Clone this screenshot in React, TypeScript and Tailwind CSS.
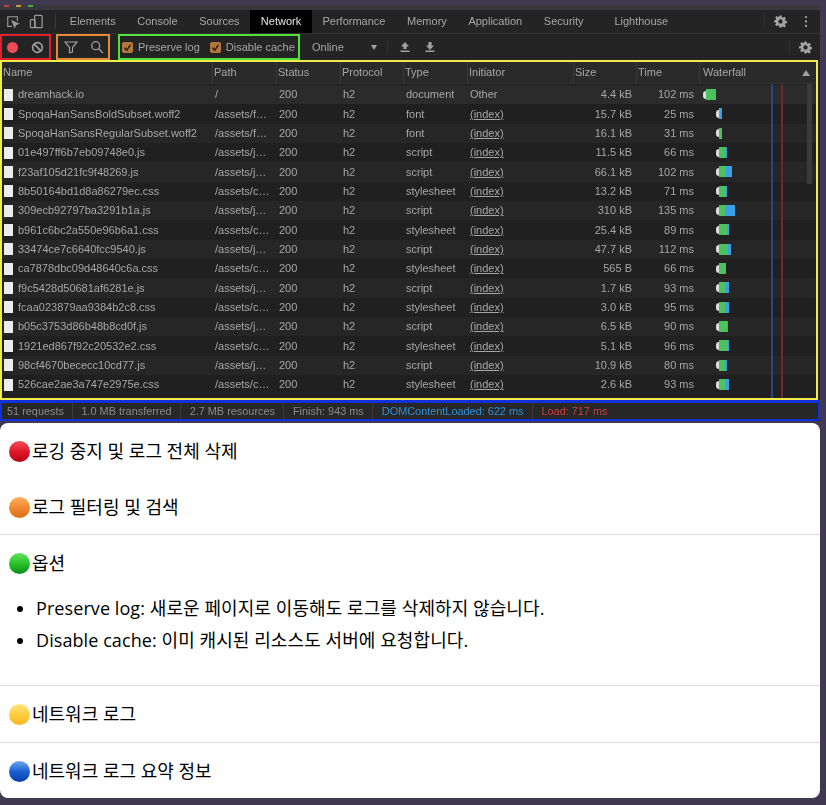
import React from "react";

const rows: [string, string, string, string, string, string, number, number, number][] = [
  ["dreamhack.io", "/", "document", "Other", "4.4 kB", "102 ms", 4, 10, 0],
  ["SpoqaHanSansBoldSubset.woff2", "/assets/f…", "font", "(index)", "15.7 kB", "25 ms", 17, 1, 2],
  ["SpoqaHanSansRegularSubset.woff2", "/assets/f…", "font", "(index)", "16.1 kB", "31 ms", 17, 3, 0],
  ["01e497ff6b7eb09748e0.js", "/assets/j…", "script", "(index)", "11.5 kB", "66 ms", 17, 6, 2],
  ["f23af105d21fc9f48269.js", "/assets/j…", "script", "(index)", "66.1 kB", "102 ms", 17, 7, 6],
  ["8b50164bd1d8a86279ec.css", "/assets/c…", "stylesheet", "(index)", "13.2 kB", "71 ms", 17, 7, 1],
  ["309ecb92797ba3291b1a.js", "/assets/j…", "script", "(index)", "310 kB", "135 ms", 17, 6, 10],
  ["b961c6bc2a550e96b6a1.css", "/assets/c…", "stylesheet", "(index)", "25.4 kB", "89 ms", 17, 8, 2],
  ["33474ce7c6640fcc9540.js", "/assets/j…", "script", "(index)", "47.7 kB", "112 ms", 17, 9, 3],
  ["ca7878dbc09d48640c6a.css", "/assets/c…", "stylesheet", "(index)", "565 B", "66 ms", 17, 7, 0],
  ["f9c5428d50681af6281e.js", "/assets/j…", "script", "(index)", "1.7 kB", "93 ms", 17, 6, 4],
  ["fcaa023879aa9384b2c8.css", "/assets/c…", "stylesheet", "(index)", "3.0 kB", "95 ms", 17, 6, 4],
  ["b05c3753d86b48b8cd0f.js", "/assets/j…", "script", "(index)", "6.5 kB", "90 ms", 17, 8, 1],
  ["1921ed867f92c20532e2.css", "/assets/c…", "stylesheet", "(index)", "5.1 kB", "96 ms", 17, 9, 1],
  ["98cf4670bececc10cd77.js", "/assets/j…", "script", "(index)", "10.9 kB", "80 ms", 17, 6, 2],
  ["526cae2ae3a747e2975e.css", "/assets/c…", "stylesheet", "(index)", "2.6 kB", "93 ms", 17, 6, 4],
];

const grid = "grid grid-cols-[211px_64px_64px_63px_64px_106px_63px_63px_1fr]";
const tabs = ["Elements", "Console", "Sources", "Network", "Performance", "Memory", "Application", "Security"];

function Gear({ className }: { className: string }) {
  return (
    <svg viewBox="0 0 24 24" className={className} fill="#a3a3a3">
      <path fillRule="evenodd" d="M10 1h4l.6 3.2 1.9.8 2.7-1.9 2.8 2.8-1.9 2.7.8 1.9 3.1.5v4l-3.2.6-.8 1.9 1.9 2.7-2.8 2.8-2.7-1.9-1.9.8L14 23h-4l-.6-3.2-1.9-.8-2.7 1.9-2.8-2.8 1.9-2.7-.8-1.9L0 14v-4l3.2-.6.8-1.9-1.9-2.7L4.9 2l2.7 1.9 1.9-.8L10 1zm2 7a4 4 0 100 8 4 4 0 000-8z" />
    </svg>
  );
}

function Check({ label }: { label: string }) {
  return (
    <div className="flex items-center gap-[5px]">
      <span className="w-[11px] h-[11px] rounded-[2px] bg-[#b3773c] flex items-center justify-center">
        <svg viewBox="0 0 12 12" className="w-[9px] h-[9px]" fill="none" stroke="#241a10" strokeWidth="2">
          <path d="M2 6.5 5 9.5 10 2.5" />
        </svg>
      </span>
      <span>{label}</span>
    </div>
  );
}

function Heading({ ball, text }: { ball: string; text: string }) {
  return (
    <div className="flex items-center pl-[9px] text-[18px] leading-[24px] text-black">
      <span className={`inline-block w-[21px] h-[21px] rounded-full shrink-0 ${ball}`} />
      <span className="ml-[2px]">{text}</span>
    </div>
  );
}

export default function App() {
  return (
    <div className="w-[826px] h-[805px] bg-[#3f3a52] overflow-hidden pt-[5px] font-['Open_Sans','Noto_Sans_CJK_KR',sans-serif]">
      <div className="w-[820px] bg-[#242424] text-[#a6a6a6] text-[11px] font-['Liberation_Sans',sans-serif] blur-[0.5px]">
        <div className="h-[5px] bg-[#39383d] flex items-start pl-[4px] gap-[7px]">
          <span className="w-[5px] h-[2px] bg-[#c9403a]" />
          <span className="w-[5px] h-[2px] bg-[#c49a3a]" />
          <span className="w-[5px] h-[2px] bg-[#4aa84a]" />
        </div>
        <div className="h-[24px] flex items-center border-b border-[#2f2f2f]">
          <div className="w-[55px] h-full flex items-center gap-[9px] pl-[6px]">
            <svg viewBox="0 0 16 16" className="w-[14px] h-[14px]" fill="none" stroke="#9a9a9a" strokeWidth="1.3">
              <path d="M7 13H2V2h11v5" />
              <path d="M7 7l7 3-3 1-1 3z" fill="#9a9a9a" />
            </svg>
            <svg viewBox="0 0 16 16" className="w-[15px] h-[15px]" fill="none" stroke="#9a9a9a" strokeWidth="1.3">
              <rect x="6" y="1.5" width="8" height="13" rx="1" />
              <rect x="1.5" y="6" width="5" height="8.5" rx="1" />
            </svg>
          </div>
          <div className="h-[15px] w-px bg-[#3a3a3a]" />
          <div className="flex h-full pl-[3px]">
            {tabs.map((t) =>
              t === "Network" ? (
                <div key={t} className="h-full px-[10.5px] bg-black text-[#e6e6e6] flex items-center">{t}</div>
              ) : (
                <div key={t} className="h-full px-[10.8px] flex items-center">{t}</div>
              )
            )}
            <div className="h-full pl-[20px] flex items-center">Lighthouse</div>
          </div>
          <div className="ml-auto flex items-center h-full">
            <div className="h-[15px] w-px bg-[#333]" />
            <Gear className="w-[13px] h-[13px] ml-[9px]" />
            <svg viewBox="0 0 4 16" className="w-[4px] h-[13px] ml-[17px] mr-[12px]" fill="#a3a3a3">
              <circle cx="2" cy="2.5" r="1.4" />
              <circle cx="2" cy="8" r="1.4" />
              <circle cx="2" cy="13.5" r="1.4" />
            </svg>
          </div>
        </div>
        <div className="h-[26px] flex items-center">
          <div className="w-[51px] h-[26px] border-[2px] border-[#e0202a] flex items-center pl-[5px] gap-[13px]">
            <span className="w-[11px] h-[11px] rounded-full bg-[#ee4c57]" />
            <svg viewBox="0 0 14 14" className="w-[13px] h-[13px]" fill="none" stroke="#a0a0a0" strokeWidth="1.8">
              <circle cx="7" cy="7" r="5.2" />
              <path d="M3.4 3.4l7.2 7.2" />
            </svg>
          </div>
          <div className="w-[54px] h-[26px] ml-[5px] border-[2px] border-[#e58a34] flex items-center pl-[6px] gap-[12px]">
            <svg viewBox="0 0 14 14" className="w-[14px] h-[14px]" fill="none" stroke="#a0a0a0" strokeWidth="1.2">
              <path d="M1 2h12L8.5 7.5V12l-3 .8V7.5z" />
            </svg>
            <svg viewBox="0 0 14 14" className="w-[14px] h-[14px]" fill="none" stroke="#a0a0a0" strokeWidth="1.3">
              <circle cx="5.7" cy="5.7" r="4" />
              <path d="M8.7 8.7l4.3 4.3" />
            </svg>
          </div>
          <div className="w-[182px] h-[26px] ml-[8px] border-[2px] border-[#52e03a] flex items-center pl-[2px] gap-[10px]">
            <Check label="Preserve log" />
            <Check label="Disable cache" />
          </div>
          <span className="ml-[12px]">Online</span>
          <span className="w-0 h-0 ml-[27px] border-x-[3.5px] border-x-transparent border-t-[5px] border-t-[#a0a0a0]" />
          <div className="h-[15px] w-px bg-[#333] ml-[10px]" />
          <svg viewBox="0 0 12 12" className="w-[12px] h-[12px] ml-[11px]" fill="#a0a0a0">
            <path d="M6 1l4 4.5H7.6V8H4.4V5.5H2zM1.5 9.6h9V11h-9z" />
          </svg>
          <svg viewBox="0 0 12 12" className="w-[12px] h-[12px] ml-[13px]" fill="#a0a0a0">
            <path d="M6 9L2 4.5h2.4V1h3.2v3.5H10zM1.5 9.6h9V11h-9z" />
          </svg>
          <div className="ml-auto h-[15px] w-px bg-[#333]" />
          <Gear className="w-[13px] h-[13px] ml-[9px] mr-[8px]" />
        </div>

        <div className="relative w-[818px] h-[340px] border-[2px] border-[#f1ec4a] bg-[#202020] overflow-hidden">
          <div className={`${grid} h-[22px] items-center bg-[#2a2a2a] border-b border-[#333]`}>
            {["Name", "Path", "Status", "Protocol", "Type", "Initiator", "Size", "Time"].map((h) => (
              <div key={h} className="pl-[1px] h-full flex items-center border-r border-[#383838]">{h}</div>
            ))}
            <div className="pl-[3px] pr-[6px] flex items-center justify-between">
              Waterfall
              <span className="w-0 h-0 border-x-[4px] border-x-transparent border-b-[6px] border-b-[#a0a0a0]" />
            </div>
          </div>
          <div className="pt-[1px]">
            {rows.map((r, i) => (
              <div
                key={r[0]}
                className={`${grid} h-[19.33px] items-center whitespace-nowrap ${i === 0 ? "bg-[#2b2b2b]" : i % 2 === 1 ? "bg-[#202020]" : "bg-[#262626]"}`}
              >
                <div className="pl-[2px] flex items-center overflow-hidden">
                  <span className="w-[9px] h-[12px] bg-[#ececec] mr-[5px] shrink-0" />
                  <span>{r[0]}</span>
                </div>
                <div className="pl-[2px]">{r[1]}</div>
                <div className="pl-[2px]">200</div>
                <div className="pl-[2px]">h2</div>
                <div className="pl-[2px]">{r[2]}</div>
                <div className={`pl-[2px] ${r[3] === "(index)" ? "underline" : ""}`}>{r[3]}</div>
                <div className="text-right pr-[5px]">{r[4]}</div>
                <div className="text-right pr-[6px]">{r[5]}</div>
                <div className="flex items-center h-full">
                  <span className="h-[11px] flex items-center" style={{ marginLeft: r[6] - 1 }}>
                    <span className="w-[3px] h-[8px] bg-[#dcdcdc] rounded-l-full" />
                    <span className="h-[11px] bg-[#4cc25e]" style={{ width: r[7] }} />
                    <span className="h-[11px] bg-[#3aa0e8]" style={{ width: r[8] }} />
                  </span>
                </div>
              </div>
            ))}
          </div>
          <div className="absolute left-[769px] top-[22px] bottom-0 w-[1.5px] bg-[#234a78]" />
          <div className="absolute left-[779px] top-[22px] bottom-0 w-[1.5px] bg-[#6e2a2a]" />
          <div className="absolute left-[805px] top-[22px] w-[5px] h-[100px] bg-[#3a3a3a]" />
        </div>

        <div className="w-[820px] h-[21px] border-[2px] border-t-[3px] border-[#1230d8] rounded-br-[3px] bg-[#272727] flex items-center text-[#8a8a8a] text-[10.9px]">
          <div className="pl-[5px] pr-[8px] border-r border-[#3c3c3c]">51 requests</div>
          <div className="px-[8.5px] border-r border-[#3c3c3c]">1.0 MB transferred</div>
          <div className="px-[8.5px] border-r border-[#3c3c3c]">2.7 MB resources</div>
          <div className="px-[8.5px] border-r border-[#3c3c3c]">Finish: 943 ms</div>
          <div className="px-[8.5px] border-r border-[#3c3c3c] text-[#2f8fd8]">DOMContentLoaded: 622 ms</div>
          <div className="px-[8.5px] text-[#c9423f]">Load: 717 ms</div>
        </div>
      </div>

      <div className="mt-[2px] w-[820px] h-[375px] bg-white rounded-[8px] text-black">
        <div className="pt-[16px] h-[112px] border-b border-[#dcdbe3] flex flex-col gap-[32px]">
          <Heading ball="bg-linear-to-b from-[#f04a58] via-[#e0162a] to-[#b80014]" text="로깅 중지 및 로그 전체 삭제" />
          <Heading ball="bg-linear-to-b from-[#ffb060] via-[#f08a30] to-[#dc6c14]" text="로그 필터링 및 검색" />
        </div>
        <div className="pt-[16px] h-[151px] border-b border-[#dcdbe3]">
          <Heading ball="bg-linear-to-b from-[#60e060] via-[#28c428] to-[#0c8c1c]" text="옵션" />
          <ul className="mt-[21px] pl-[36px] list-disc text-[18px] leading-[24px] flex flex-col gap-[8px] tracking-[0.08px]">
            <li>Preserve log: 새로운 페이지로 이동해도 로그를 삭제하지 않습니다.</li>
            <li>Disable cache: 이미 캐시된 리소스도 서버에 요청합니다.</li>
          </ul>
        </div>
        <div className="h-[57px] pt-[16px] border-b border-[#dcdbe3]">
          <Heading ball="bg-linear-to-b from-[#ffe680] via-[#ffcf40] to-[#fbb31c]" text="네트워크 로그" />
        </div>
        <div className="pt-[16px]">
          <Heading ball="bg-linear-to-b from-[#6fa6ea] via-[#1a60d0] to-[#0a3ea8]" text="네트워크 로그 요약 정보" />
        </div>
      </div>
    </div>
  );
}
